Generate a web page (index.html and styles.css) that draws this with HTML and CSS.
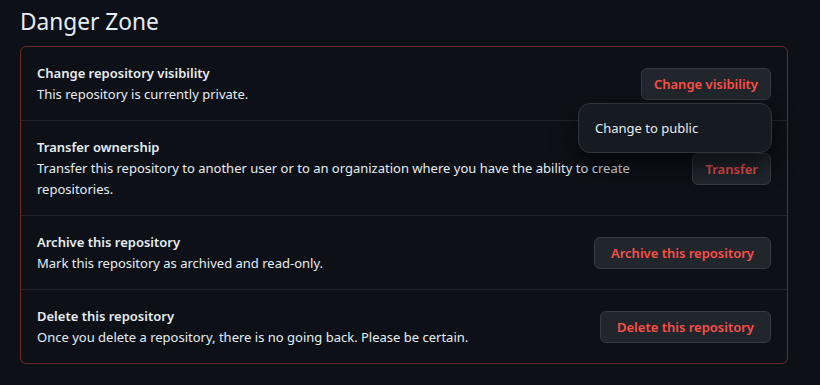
FILE: index.html
```html
<!DOCTYPE html>
<html lang="en">
<head>
  <meta charset="UTF-8" />
  <meta name="viewport" content="width=device-width, initial-scale=1" />
  <title>Danger Zone</title>
  <link rel="stylesheet" href="styles.css">
</head>
<body>
  <h2 class="zone-title">Danger Zone</h2>

  <div class="danger-box">
    <div class="danger-row">
      <div class="row-text">
        <div class="row-title">Change repository visibility</div>
        <div class="row-desc">This repository is currently private.</div>
      </div>
      <div class="row-action">
        <button class="btn-danger btn-compact">Change visibility</button>
        <div class="menu">
          <div class="menu-item">Change to public</div>
        </div>
      </div>
    </div>

    <div class="danger-row">
      <div class="row-text">
        <div class="row-title">Transfer ownership</div>
        <div class="row-desc">Transfer this repository to another user or to an organization where you have the ability to create repositories.</div>
      </div>
      <div class="row-action">
        <button class="btn-danger btn-compact">Transfer</button>
      </div>
    </div>

    <div class="danger-row">
      <div class="row-text">
        <div class="row-title">Archive this repository</div>
        <div class="row-desc">Mark this repository as archived and read-only.</div>
      </div>
      <div class="row-action">
        <button class="btn-danger">Archive this repository</button>
      </div>
    </div>

    <div class="danger-row">
      <div class="row-text">
        <div class="row-title">Delete this repository</div>
        <div class="row-desc">Once you delete a repository, there is no going back. Please be certain.</div>
      </div>
      <div class="row-action">
        <button class="btn-danger">Delete this repository</button>
      </div>
    </div>
  </div>
</body>
</html>
```

FILE: styles.css
```css
body {
  background-color: #0d1117;
  color: #e6edf3;
  font-family: 'Noto Sans', sans-serif;
  font-size: 13px;
  line-height: 21px;
  margin: 0;
  padding: 4px 32px 0 20px;
  overflow: hidden;
}

.zone-title {
  font-size: 22.7px;
  font-weight: 400;
  line-height: 36px;
  margin: 0 0 6px;
}

.danger-box {
  border: 1px solid rgba(248, 81, 73, 0.4);
  border-radius: 6px;
}

.danger-row {
  display: flex;
  align-items: center;
  gap: 16px;
  padding: 16px 16px 15px;
  border-top: 1px solid #21262d;
}

.danger-row:first-child {
  border-top: none;
}

.row-text {
  flex: 1;
}

.row-title {
  font-weight: 600;
}

.row-action {
  position: relative;
  z-index: 1;
}

.danger-row:first-child .row-action {
  z-index: 5;
}

.btn-danger {
  background-color: #21262d;
  color: #f85149;
  border: 1px solid #363b42;
  border-radius: 6px;
  height: 32px;
  padding: 0 16px;
  font-family: inherit;
  font-size: 13px;
  font-weight: 600;
  white-space: nowrap;
  cursor: pointer;
}

.btn-compact {
  padding: 0 12px;
}

.menu {
  position: absolute;
  top: 35px;
  right: -1px;
  width: 176px;
  padding: 8px;
  background-color: #161b22;
  border: 1px solid #30363d;
  border-radius: 12px;
  box-shadow: 0 12px 24px rgba(1, 4, 9, 0.7);
}

.menu-item {
  padding: 6px 8px;
  line-height: 20px;
  white-space: nowrap;
}
```
